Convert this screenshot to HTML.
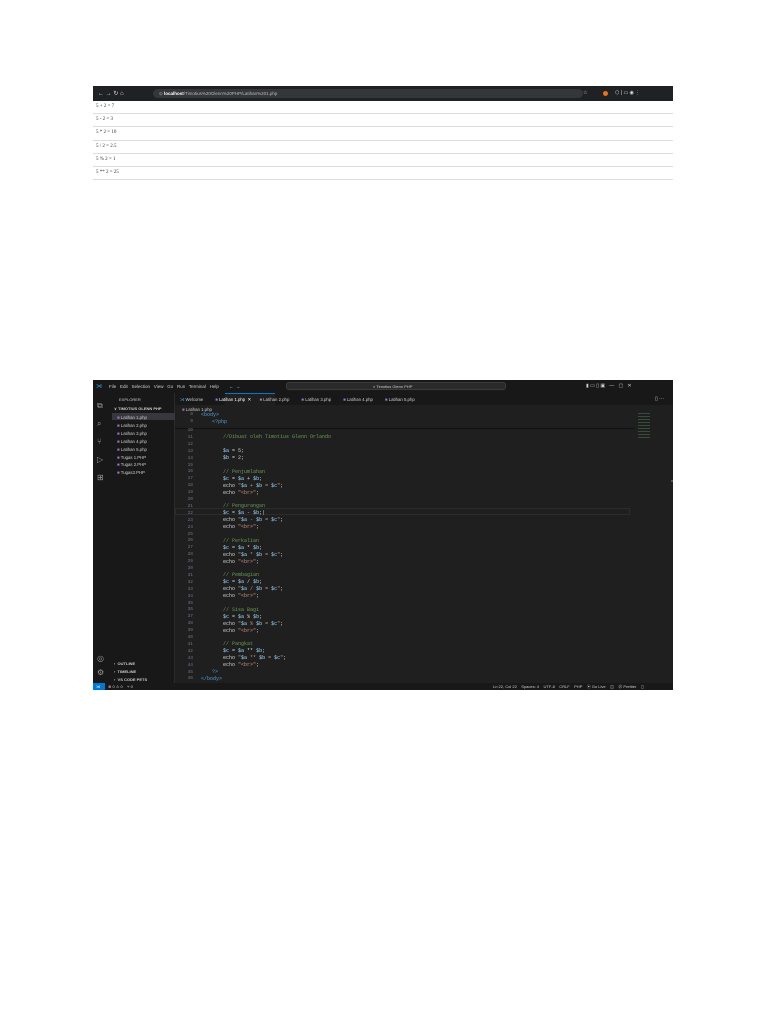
<!DOCTYPE html>
<html><head><style>
*{margin:0;padding:0;box-sizing:border-box}
body{width:768px;height:1024px;background:#fff;position:relative;font-family:"Liberation Sans",sans-serif;overflow:hidden}
.abs{position:absolute}
#br{left:93px;top:86px;width:580px;height:94px}
#bar{height:15px;background:#202124;position:relative}
.row{height:13.2px;border-bottom:1px solid #ddd;font:5px "Liberation Serif",serif;color:#333;padding:3px 0 0 3px}
#vs{left:93px;top:380px;width:580px;height:310px;background:#1f1f1f;overflow:hidden;font-family:"Liberation Sans",sans-serif}
.t{position:absolute;font-size:4.5px;color:#ccc;white-space:pre}
.code{position:absolute;left:82px;font:5px "Liberation Mono",monospace;white-space:pre;color:#d4d4d4}
.ln{position:absolute;left:88px;width:12px;text-align:right;font:4.5px "Liberation Mono",monospace;color:#6e7681}
.c{color:#6a9955}.v{color:#9cdcfe}.s{color:#ce9178}.k{color:#569cd6}
</style></head><body>
<div id="br" class="abs">
 <div id="bar">
  <span class="t" style="left:5px;top:4px;color:#ddd;font-size:6px">← → ↻ ⌂</span>
  <div class="abs" style="left:60px;top:3px;width:430px;height:9px;background:#35363a;border-radius:5px"></div>
  <span class="t" style="left:66px;top:5px;color:#bbb">⊙ <b style="color:#fff">localhost</b>/Timotius%20Glenn%20PHP/Latihan%201.php</span>
  <span class="t" style="left:490px;top:4px;color:#ddd;font-size:5px">☆</span>
  <div class="abs" style="left:510px;top:5px;width:5px;height:5px;border-radius:50%;background:#e8711a"></div>
  <span class="t" style="left:522px;top:4px;color:#ddd;font-size:5px">⬡ | ▭ ◉ ⋮</span>
 </div>
 <div class="row">5 + 2 = 7</div>
 <div class="row">5 - 2 = 3</div>
 <div class="row">5 * 2 = 10</div>
 <div class="row">5 / 2 = 2.5</div>
 <div class="row">5 % 2 = 1</div>
 <div class="row">5 ** 2 = 25</div>
</div>

<div id="vs" class="abs">
 <div class="abs" style="left:0;top:0;width:580px;height:13px;background:#181818"></div>
 <span class="t" style="left:3px;top:3px;color:#3b9fe8;font-size:6px">⋊</span>
 <span class="t" style="left:16px;top:4px">File   Edit   Selection   View   Go   Run   Terminal   Help        ←  →</span>
 <div class="abs" style="left:193px;top:2px;width:220px;height:8px;background:#2a2a2a;border:1px solid #3c3c3c;border-radius:3px"></div>
 <span class="t" style="left:280px;top:4px;font-size:4px">⌕ Timotius Glenn PHP</span>
 <span class="t" style="left:493px;top:3px;font-size:5px">▮ ▭ ▯ ▣   —   ▢   ✕</span>
 <div class="abs" style="left:0;top:13px;width:17px;height:290px;background:#181818"></div>
 <span class="t" style="left:4px;top:17px;font-size:8px;line-height:18px;color:#999">⧉<br>⌕<br>⑂<br>▷<br>⊞</span>
 <span class="t" style="left:4px;top:272px;font-size:8px;line-height:14px;color:#999">◎<br>⚙</span>
 <div class="abs" style="left:17px;top:13px;width:65px;height:290px;background:#181818;border-right:1px solid #2b2b2b"></div>
 <span class="t" style="left:26px;top:17px;font-size:4px">EXPLORER</span>
 <span class="t" style="left:21px;top:26px;font-size:4px;font-weight:bold">∨ TIMOTIUS GLENN PHP</span>
 <div class="abs" style="left:19px;top:33px;width:63px;height:7px;background:#37373d"></div>
 <span class="t" style="left:24px;top:34px;font-size:4.3px;line-height:7.9px"><span style="color:#a074c4">■</span> Latihan 1.php<br><span style="color:#a074c4">■</span> Latihan 2.php<br><span style="color:#a074c4">■</span> Latihan 3.php<br><span style="color:#a074c4">■</span> Latihan 4.php<br><span style="color:#a074c4">■</span> Latihan 5.php<br><span style="color:#a074c4">■</span> Tugas 1.PHP<br><span style="color:#a074c4">■</span> Tugas 2.PHP<br><span style="color:#a074c4">■</span> Tugas3.PHP</span>
 <span class="t" style="left:21px;top:280px;font-size:4px;font-weight:bold;line-height:8px">›  OUTLINE<br>›  TIMELINE<br>›  VS CODE PETS</span>
 <div class="abs" style="left:82px;top:13px;width:498px;height:12px;background:#181818"></div>
 <div class="abs" style="left:132px;top:13px;width:50px;height:12px;background:#1f1f1f;border-top:1px solid #0078d4"></div>
 <span class="t" style="left:87px;top:17px;font-size:4.3px"><span style="color:#3b9fe8">⋊</span> Welcome          <span style="color:#a074c4">■</span> <span style="color:#fff">Latihan 1.php  ✕</span>       <span style="color:#a074c4">■</span> Latihan 2.php          <span style="color:#a074c4">■</span> Latihan 3.php          <span style="color:#a074c4">■</span> Latihan 4.php          <span style="color:#a074c4">■</span> Latihan 5.php</span>
 <span class="t" style="left:562px;top:16px;font-size:5px">▯ ···</span>
 <span class="t" style="left:89px;top:27px;font-size:4.3px"><span style="color:#a074c4">■</span> Latihan 1.php</span>
 <div class="abs" style="left:82px;top:48px;width:460px;height:1px;background:#111"></div>
 <div class="abs" style="left:82px;top:128px;width:455px;height:7px;border:1px solid #2c2c2c"></div>
 <div class="abs" style="left:545px;top:33px;width:12px;height:26px;background:repeating-linear-gradient(#4a6a4a 0 1px,transparent 1px 3px);opacity:.6"></div>
 <div class="abs" style="left:578px;top:100px;width:2px;height:2px;background:#555"></div>
 <div id="code"></div>
 <div class="abs" style="left:0;top:303px;width:580px;height:7px;background:#181818"></div>
 <div class="abs" style="left:0;top:303px;width:12px;height:7px;background:#0078d4"></div>
 <span class="t" style="left:3px;top:304px;font-size:4px;color:#fff">⋊</span>
 <span class="t" style="left:15px;top:304px;font-size:4px">⊗ 0 ⚠ 0    ⑂ 0</span>
 <span class="t" style="left:400px;top:304px;font-size:4px">Ln 22, Col 22    Spaces: 4    UTF-8    CRLF    PHP    ⦿ Go Live    ◫    ⊘ Prettier    ◻</span>
</div>
<script>
var L=[
[8,'<span class="k">&lt;body&gt;</span>',1],[9,'<span class="k">&lt;?php</span>',2],[10,'',0],
[11,'<span class="c">//Dibuat oleh Timotius Glenn Orlando</span>',3],[12,'',0],
[13,'<span class="v">$a</span> = 5;',3],[14,'<span class="v">$b</span> = 2;',3],[15,'',0],
[16,'<span class="c">// Penjumlahan</span>',3],[17,'<span class="v">$c</span> = <span class="v">$a</span> + <span class="v">$b</span>;',3],[18,'echo <span class="s">"<span class="v">$a</span> + <span class="v">$b</span> = <span class="v">$c</span>"</span>;',3],[19,'echo <span class="s">"&lt;br&gt;"</span>;',3],[20,'',0],
[21,'<span class="c">// Pengurangan</span>',3],[22,'<span class="v">$c</span> = <span class="v">$a</span> - <span class="v">$b</span>;|',3],[23,'echo <span class="s">"<span class="v">$a</span> - <span class="v">$b</span> = <span class="v">$c</span>"</span>;',3],[24,'echo <span class="s">"&lt;br&gt;"</span>;',3],[25,'',0],
[26,'<span class="c">// Perkalian</span>',3],[27,'<span class="v">$c</span> = <span class="v">$a</span> * <span class="v">$b</span>;',3],[28,'echo <span class="s">"<span class="v">$a</span> * <span class="v">$b</span> = <span class="v">$c</span>"</span>;',3],[29,'echo <span class="s">"&lt;br&gt;"</span>;',3],[30,'',0],
[31,'<span class="c">// Pembagian</span>',3],[32,'<span class="v">$c</span> = <span class="v">$a</span> / <span class="v">$b</span>;',3],[33,'echo <span class="s">"<span class="v">$a</span> / <span class="v">$b</span> = <span class="v">$c</span>"</span>;',3],[34,'echo <span class="s">"&lt;br&gt;"</span>;',3],[35,'',0],
[36,'<span class="c">// Sisa Bagi</span>',3],[37,'<span class="v">$c</span> = <span class="v">$a</span> % <span class="v">$b</span>;',3],[38,'echo <span class="s">"<span class="v">$a</span> % <span class="v">$b</span> = <span class="v">$c</span>"</span>;',3],[39,'echo <span class="s">"&lt;br&gt;"</span>;',3],[40,'',0],
[41,'<span class="c">// Pangkat</span>',3],[42,'<span class="v">$c</span> = <span class="v">$a</span> ** <span class="v">$b</span>;',3],[43,'echo <span class="s">"<span class="v">$a</span> ** <span class="v">$b</span> = <span class="v">$c</span>"</span>;',3],[44,'echo <span class="s">"&lt;br&gt;"</span>;',3],
[45,'<span class="k">?&gt;</span>',2],[46,'<span class="k">&lt;/body&gt;</span>',1],[47,'<span class="k">&lt;/html&gt;</span>',1]];
var h='';
L.forEach(function(r,i){var y=i<2?32+i*7:48+(i-2)*6.9;
h+='<span class="ln" style="top:'+y+'px">'+r[0]+'</span><span class="code" style="top:'+(y-0.5)+'px;left:'+(97+r[2]*11)+'px">'+r[1]+'</span>';});
document.getElementById('code').innerHTML=h;
</script>
</body></html>
